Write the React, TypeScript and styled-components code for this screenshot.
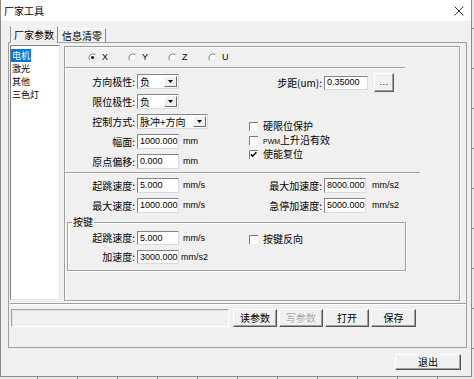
import React from "react";
import styled, { createGlobalStyle } from "styled-components";

const CJK = `"Noto Sans CJK SC", "Microsoft YaHei", sans-serif`;
const LAT = `"Liberation Sans", Arial, sans-serif`;

const Global = createGlobalStyle`
  html, body { margin: 0; padding: 0; }
  body {
    width: 474px;
    height: 379px;
    overflow: hidden;
    background-color: #e8e8e8;
    background-image:
      repeating-linear-gradient(to right, transparent 0 37px, #8a8a8a 37px 38px, transparent 38px 40px),
      repeating-linear-gradient(to bottom, transparent 0 28px, #8a8a8a 28px 29px, transparent 29px 40px);
    font-family: ${CJK};
    font-size: 10px;
    color: #000;
  }
  #root { width: 474px; height: 379px; }
`;

const Window = styled.div`
  width: 472px;
  height: 377px;
  box-sizing: border-box;
  border: 1px solid #8c8c8c;
  border-top: none;
  display: flex;
  flex-direction: column;
  background: #f0f0f0;
`;

const TitleBar = styled.div`
  height: 21px;
  flex: none;
  background: #fff;
  display: flex;
  align-items: center;
  justify-content: space-between;
  padding: 1px 7px 0 3px;
  box-sizing: border-box;
  font-size: 10px;
  line-height: 1;
`;

const Body = styled.div`
  flex: 1;
  display: flex;
  flex-direction: column;
  padding: 0 4px 0 7px;
`;

const TabStrip = styled.div`
  height: 21px;
  flex: none;
  display: flex;
  align-items: flex-end;
  padding-left: 2px;
`;

const Tab = styled.div<{ $active?: boolean }>`
  position: relative;
  z-index: ${(p) => (p.$active ? 1 : 0)};
  width: 48px;
  height: ${(p) => (p.$active ? 17 : 14)}px;
  margin-bottom: ${(p) => (p.$active ? -1 : 0)}px;
  box-sizing: border-box;
  background: #f0f0f0;
  border-top: 1px solid #fff;
  border-left: 1px solid ${(p) => (p.$active ? "#9a9a9a" : "transparent")};
  border-right: 1px solid #8a8a8a;
  display: flex;
  align-items: center;
  justify-content: center;
  padding-bottom: ${(p) => (p.$active ? 1 : 0)}px;
  line-height: 1;
  white-space: nowrap;
`;

const TabPage = styled.div`
  width: 459px;
  height: 306px;
  box-sizing: border-box;
  border: 1px solid #a0a0a0;
  display: flex;
  flex-direction: column;
  padding: 2px 0 0 1px;
`;

const ContentRow = styled.div`
  display: flex;
  align-items: flex-start;
  height: 256px;
  gap: 4px;
`;

const ListBox = styled.div`
  width: 50px;
  height: 255px;
  box-sizing: border-box;
  background: #fff;
  border: 1px solid;
  border-color: #828282 #e3e3e3 #e3e3e3 #828282;
  padding-top: 3px;
  display: flex;
  flex-direction: column;
`;

const ListItem = styled.div`
  height: 13.1px;
  display: flex;
  align-items: center;
  white-space: nowrap;
  font-size: 9px;
`;

const ItemText = styled.span<{ $selected?: boolean }>`
  display: block;
  line-height: 11px;
  padding: 1px 1px;
  background: ${(p) => (p.$selected ? "#0078d7" : "transparent")};
  color: ${(p) => (p.$selected ? "#fff" : "#000")};
`;

const Panel = styled.div`
  margin-top: 1px;
  width: 396px;
  height: 255px;
  box-sizing: border-box;
  border: 1px solid #a0a0a0;
  box-shadow: 1px 1px 0 #fff, inset 1px 1px 0 #fff;
  display: flex;
  flex-direction: column;
`;

const RadioRow = styled.div`
  height: 20px;
  flex: none;
  display: flex;
  align-items: center;
  padding-left: 23px;
`;

const RadioItem = styled.div`
  width: 40px;
  display: flex;
  align-items: center;
  gap: 5px;
  font-family: ${LAT};
  font-size: 9px;
  line-height: 1;
`;

const Separator = styled.div<{ $w: number }>`
  flex: none;
  width: ${(p) => p.$w}px;
  border-top: 1px solid #a0a0a0;
  border-bottom: 1px solid #fff;
`;

const Section = styled.div<{ $h: number }>`
  height: ${(p) => p.$h}px;
  flex: none;
  display: flex;
`;

const Column = styled.div<{ $w?: number; $pt: number; $gap: number; $pl?: number }>`
  ${(p) => (p.$w ? `width: ${p.$w}px; flex: none;` : "flex: 1;")}
  display: flex;
  flex-direction: column;
  padding-top: ${(p) => p.$pt}px;
  padding-left: ${(p) => p.$pl ?? 0}px;
  gap: ${(p) => p.$gap}px;
`;

const FieldRow = styled.div<{ $h: number; $mt?: number }>`
  height: ${(p) => p.$h}px;
  margin-top: ${(p) => p.$mt ?? 0}px;
  flex: none;
  display: flex;
  align-items: center;
  white-space: nowrap;
`;

const Label = styled.div<{ $w: number }>`
  width: ${(p) => p.$w}px;
  margin-right: 2px;
  text-align: right;
  line-height: 1;
  white-space: nowrap;
  flex: none;
`;

const TextBox = styled.div<{ $w: number; $h?: number }>`
  width: ${(p) => p.$w}px;
  height: ${(p) => p.$h ?? 15}px;
  box-sizing: border-box;
  background: #fff;
  border: 1px solid;
  border-color: #858585 #dadada #dadada #858585;
  padding-left: 2px;
  display: flex;
  align-items: center;
  font-family: ${LAT};
  font-size: 9px;
  line-height: 1;
  flex: none;
`;

const Combo = styled.div<{ $w: number }>`
  width: ${(p) => p.$w}px;
  height: 15px;
  box-sizing: border-box;
  background: #fff;
  border: 1px solid;
  border-color: #858585 #dadada #dadada #858585;
  padding: 0 1px 0 2px;
  display: flex;
  align-items: center;
  justify-content: space-between;
  line-height: 1;
  flex: none;
`;

const DropBtn = styled.div`
  width: 13px;
  height: 11px;
  box-sizing: border-box;
  background: #f0f0f0;
  border: 1px solid;
  border-color: #fff #696969 #696969 #fff;
  display: flex;
  align-items: center;
  justify-content: center;
`;

const Unit = styled.span<{ $ml: number }>`
  margin-left: ${(p) => p.$ml}px;
  font-family: ${LAT};
  font-size: 9px;
  line-height: 1;
`;

const SmallBtn = styled.div`
  width: 20px;
  height: 19px;
  margin-left: 6px;
  box-sizing: border-box;
  background: #f0f0f0;
  border: 1px solid;
  border-color: #fff #5a5a5a #5a5a5a #fff;
  box-shadow: inset -1px -1px 0 #a0a0a0;
  display: flex;
  align-items: center;
  justify-content: center;
  font-family: ${LAT};
  font-size: 9px;
  line-height: 1;
  color: #000;
  letter-spacing: 0.5px;
`;

const CheckRow = styled.div<{ $mt?: number }>`
  height: 14px;
  margin-top: ${(p) => p.$mt ?? 0}px;
  flex: none;
  display: flex;
  align-items: center;
  gap: 5px;
  line-height: 1;
  white-space: nowrap;
`;

const Tiny = styled.span`
  font-family: ${LAT};
  font-size: 7px;
`;

const Group = styled.div`
  position: relative;
  margin: 9px 0 0 2px;
  width: 339px;
  height: 49px;
  box-sizing: border-box;
  border: 1px solid #a0a0a0;
  box-shadow: 1px 1px 0 #fff, inset 1px 1px 0 #fff;
  padding-top: 8px;
  display: flex;
`;

const Legend = styled.span`
  position: absolute;
  top: -7px;
  left: 4px;
  padding: 0 1px;
  background: #f0f0f0;
  line-height: 12px;
`;

const HSep = styled.div`
  margin-top: 2px;
  width: 456px;
  border-top: 1px solid #a0a0a0;
  border-bottom: 1px solid #fff;
`;

const BottomBar = styled.div`
  margin-top: 4px;
  display: flex;
  align-items: center;
  gap: 4px;
`;

const StatusField = styled.div`
  width: 218px;
  height: 18px;
  box-sizing: border-box;
  margin-left: 1px;
  background: #f0f0f0;
  border: 1px solid;
  border-color: #a0a0a0 #fff #fff #a0a0a0;
  box-shadow: inset 1px 1px 0 #e3e3e3;
`;

const ButtonGroup = styled.div`
  display: flex;
  gap: 2px;
`;

const Button = styled.div<{ $w: number; $h: number; $disabled?: boolean }>`
  width: ${(p) => p.$w}px;
  height: ${(p) => p.$h}px;
  box-sizing: border-box;
  background: #f0f0f0;
  border: 1px solid;
  border-color: #fff #555 #555 #fff;
  box-shadow: inset -1px -1px 0 #a0a0a0;
  display: flex;
  align-items: center;
  justify-content: center;
  line-height: 1;
  white-space: nowrap;
  color: ${(p) => (p.$disabled ? "#a8a8a8" : "#000")};
  text-shadow: ${(p) => (p.$disabled ? "1px 1px 0 #fff" : "none")};
`;

const Footer = styled.div`
  margin-top: 6px;
  padding-right: 6px;
  display: flex;
  justify-content: flex-end;
`;

const Radio = ({ checked }: { checked?: boolean }) => (
  <svg width="9" height="9" viewBox="0 0 9 9">
    <circle cx="4.5" cy="4.5" r="4" fill="#fff" />
    <path d="M1.7 7.3 A4 4 0 0 1 7.3 1.7" fill="none" stroke="#7a7a7a" strokeWidth="1" />
    <path d="M7.3 1.7 A4 4 0 0 1 1.7 7.3" fill="none" stroke="#e0e0e0" strokeWidth="1" />
    {checked && <circle cx="4.5" cy="4.5" r="1.6" fill="#111" />}
  </svg>
);

const Check = ({ checked }: { checked?: boolean }) => (
  <svg width="9" height="9" viewBox="0 0 9 9">
    <rect x="0" y="0" width="9" height="9" fill="#fff" />
    <polyline points="0.5,9 0.5,0.5 9,0.5" fill="none" stroke="#7a7a7a" strokeWidth="1" />
    {checked && (
      <polyline points="1.8,4.2 3.6,6.2 7.4,2.2" fill="none" stroke="#000" strokeWidth="1.5" />
    )}
  </svg>
);

const Triangle = () => (
  <svg width="5" height="3" viewBox="0 0 5 3">
    <polygon points="0,0 5,0 2.5,3" fill="#000" />
  </svg>
);

const CloseIcon = () => (
  <svg width="10" height="10" viewBox="0 0 10 10">
    <path d="M0.5 0.5 L9.5 9.5 M9.5 0.5 L0.5 9.5" stroke="#333" strokeWidth="1" />
  </svg>
);

export default function App() {
  return (
    <>
      <Global />
      <Window>
        <TitleBar>
          <span>厂家工具</span>
          <CloseIcon />
        </TitleBar>
        <Body>
          <TabStrip>
            <Tab $active>厂家参数</Tab>
            <Tab>信息清零</Tab>
          </TabStrip>
          <TabPage>
            <ContentRow>
              <ListBox>
                <ListItem>
                  <ItemText $selected>电机</ItemText>
                </ListItem>
                <ListItem>
                  <ItemText>激光</ItemText>
                </ListItem>
                <ListItem>
                  <ItemText>其他</ItemText>
                </ListItem>
                <ListItem>
                  <ItemText>三色灯</ItemText>
                </ListItem>
              </ListBox>
              <Panel>
                <RadioRow>
                  {["X", "Y", "Z", "U"].map((a, i) => (
                    <RadioItem key={a}>
                      <Radio checked={i === 0} />
                      <span>{a}</span>
                    </RadioItem>
                  ))}
                </RadioRow>
                <Separator $w={340} />
                <Section $h={103}>
                  <Column $w={175} $pt={5} $gap={5}>
                    <FieldRow $h={15}>
                      <Label $w={70}>方向极性:</Label>
                      <Combo $w={42}>
                        <span>负</span>
                        <DropBtn>
                          <Triangle />
                        </DropBtn>
                      </Combo>
                    </FieldRow>
                    <FieldRow $h={15}>
                      <Label $w={70}>限位极性:</Label>
                      <Combo $w={42}>
                        <span>负</span>
                        <DropBtn>
                          <Triangle />
                        </DropBtn>
                      </Combo>
                    </FieldRow>
                    <FieldRow $h={15}>
                      <Label $w={70}>控制方式:</Label>
                      <Combo $w={71}>
                        <span>脉冲+方向</span>
                        <DropBtn>
                          <Triangle />
                        </DropBtn>
                      </Combo>
                    </FieldRow>
                    <FieldRow $h={15}>
                      <Label $w={70}>幅面:</Label>
                      <TextBox $w={42}>1000.000</TextBox>
                      <Unit $ml={4}>mm</Unit>
                    </FieldRow>
                    <FieldRow $h={15}>
                      <Label $w={70}>原点偏移:</Label>
                      <TextBox $w={42}>0.000</TextBox>
                      <Unit $ml={4}>mm</Unit>
                    </FieldRow>
                  </Column>
                  <Column $pt={4} $gap={0}>
                    <FieldRow $h={19}>
                      <Label $w={82}>步距(um):</Label>
                      <TextBox $w={44} $h={14}>0.35000</TextBox>
                      <SmallBtn>...</SmallBtn>
                    </FieldRow>
                    <Column $pt={0} $gap={0} $pl={9}>
                      <CheckRow $mt={27}>
                        <Check />
                        <span>硬限位保护</span>
                      </CheckRow>
                      <CheckRow>
                        <Check />
                        <span>
                          <Tiny>PWM</Tiny>上升沿有效
                        </span>
                      </CheckRow>
                      <CheckRow>
                        <Check checked />
                        <span>使能复位</span>
                      </CheckRow>
                    </Column>
                  </Column>
                </Section>
                <Separator $w={355} />
                <Section $h={39}>
                  <Column $w={175} $pt={4} $gap={5}>
                    <FieldRow $h={15}>
                      <Label $w={70}>起跳速度:</Label>
                      <TextBox $w={42}>5.000</TextBox>
                      <Unit $ml={4}>mm/s</Unit>
                    </FieldRow>
                    <FieldRow $h={15}>
                      <Label $w={70}>最大速度:</Label>
                      <TextBox $w={42}>1000.000</TextBox>
                      <Unit $ml={4}>mm/s</Unit>
                    </FieldRow>
                  </Column>
                  <Column $pt={4} $gap={5}>
                    <FieldRow $h={15}>
                      <Label $w={82}>最大加速度:</Label>
                      <TextBox $w={42}>8000.000</TextBox>
                      <Unit $ml={6}>mm/s2</Unit>
                    </FieldRow>
                    <FieldRow $h={15}>
                      <Label $w={82}>急停加速度:</Label>
                      <TextBox $w={42}>5000.000</TextBox>
                      <Unit $ml={6}>mm/s2</Unit>
                    </FieldRow>
                  </Column>
                </Section>
                <Group>
                  <Legend>按键</Legend>
                  <Column $w={172} $pt={0} $gap={5}>
                    <FieldRow $h={14}>
                      <Label $w={67}>起跳速度:</Label>
                      <TextBox $w={42} $h={14}>5.000</TextBox>
                      <Unit $ml={4}>mm/s</Unit>
                    </FieldRow>
                    <FieldRow $h={14}>
                      <Label $w={67}>加速度:</Label>
                      <TextBox $w={42} $h={14}>3000.000</TextBox>
                      <Unit $ml={2}>mm/s2</Unit>
                    </FieldRow>
                  </Column>
                  <Column $pt={1} $gap={0} $pl={9}>
                    <CheckRow>
                      <Check />
                      <span>按键反向</span>
                    </CheckRow>
                  </Column>
                </Group>
              </Panel>
            </ContentRow>
            <HSep />
            <BottomBar>
              <StatusField />
              <ButtonGroup>
                <Button $w={44} $h={18}>读参数</Button>
                <Button $w={44} $h={18} $disabled>
                  写参数
                </Button>
                <Button $w={44} $h={18}>打开</Button>
                <Button $w={45} $h={18}>保存</Button>
              </ButtonGroup>
            </BottomBar>
          </TabPage>
          <Footer>
            <Button $w={66} $h={16}>退出</Button>
          </Footer>
        </Body>
      </Window>
    </>
  );
}
